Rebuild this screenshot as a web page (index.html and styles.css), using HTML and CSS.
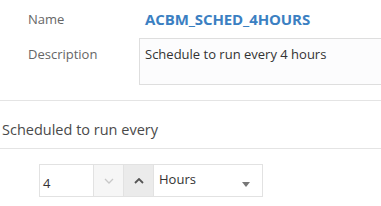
FILE: index.html
```html
<!DOCTYPE html>
<html lang="en">
<head>
<meta charset="UTF-8" />
<title>Schedule</title>
<link rel="stylesheet" href="styles.css">
</head>
<body>

<div class="props">
<div class="prop-row">
<div class="prop-label">Name</div>
<div class="prop-name">ACBM_SCHED_4HOURS</div>
</div>
<div class="prop-row desc-row">
<div class="prop-label">Description</div>
<div class="prop-desc">Schedule to run every 4 hours</div>
</div>
</div>

<div class="section-title">Scheduled to run every</div>

<div class="interval">
<div class="num-input">4</div>
<div class="spin-btn spin-down">
<svg width="10" height="6" viewBox="0 0 10 6"><path d="M1 1 L5 5 L9 1" fill="none" stroke="#c8c8c8" stroke-width="1.3"/></svg>
</div>
<div class="spin-btn spin-up">
<svg width="10" height="6" viewBox="0 0 10 6"><path d="M1 5 L5 1 L9 5" fill="none" stroke="#555" stroke-width="1.8"/></svg>
</div>
<div class="unit-select">
<span>Hours</span>
<svg class="caret" width="8" height="5" viewBox="0 0 8 5"><path d="M0 0 L8 0 L4 5 Z" fill="#777"/></svg>
</div>
</div>

</body>
</html>
```

FILE: styles.css
```css
* { box-sizing: border-box; }

html, body {
margin: 0; padding: 0;
background: #ffffff;
font-family: "Open Sans", "Noto Sans", Arial, sans-serif;
overflow: hidden;
}

.props {
padding: 8px 0 0 28px;
border-bottom: 1px solid #e4e4e4;
height: 101px;
}

.prop-row {
display: flex;
align-items: center;
height: 22px;
}

.prop-label {
width: 117px;
flex-shrink: 0;
font-size: 13px;
color: #666;
}

.prop-name {
font-size: 15px;
font-weight: bold;
color: #3b80c2;
letter-spacing: -0.1px;
}

.desc-row {
align-items: flex-start;
margin-top: 8px;
}

.desc-row .prop-label { padding-top: 7px; }

.prop-desc {
flex-shrink: 0;
margin-left: -6px;
width: 260px;
height: 47px;
border: 1px solid #dedede;
border-right: none;
background: #fcfcfd;
padding: 6px 0 0 5px;
font-size: 13px;
color: #333;
}

.section-title {
height: 48px;
padding: 19px 0 0 2px;
font-size: 14.5px;
color: #4a4a4a;
border-bottom: 1px solid #e4e4e4;
}

.interval {
display: flex;
margin: 15px 0 0 39px;
width: 224px;
height: 33px;
border: 1px solid #e2e2e2;
}

.num-input {
width: 53px;
padding: 9px 0 0 3px;
font-size: 13px;
color: #333;
}

.spin-btn {
width: 30px;
display: flex;
justify-content: center;
align-items: center;
border-left: 1px solid #e2e2e2;
}

.spin-down { background: #f6f6f6; }
.spin-up { background: #ebebeb; }

.unit-select {
flex: 1;
display: flex;
justify-content: space-between;
align-items: center;
padding: 0 12px 0 5px;
border-left: 1px solid #e2e2e2;
font-size: 13px;
color: #333;
}

.unit-select span { margin-top: -3px; }

.caret { margin-top: 8px; }
```
